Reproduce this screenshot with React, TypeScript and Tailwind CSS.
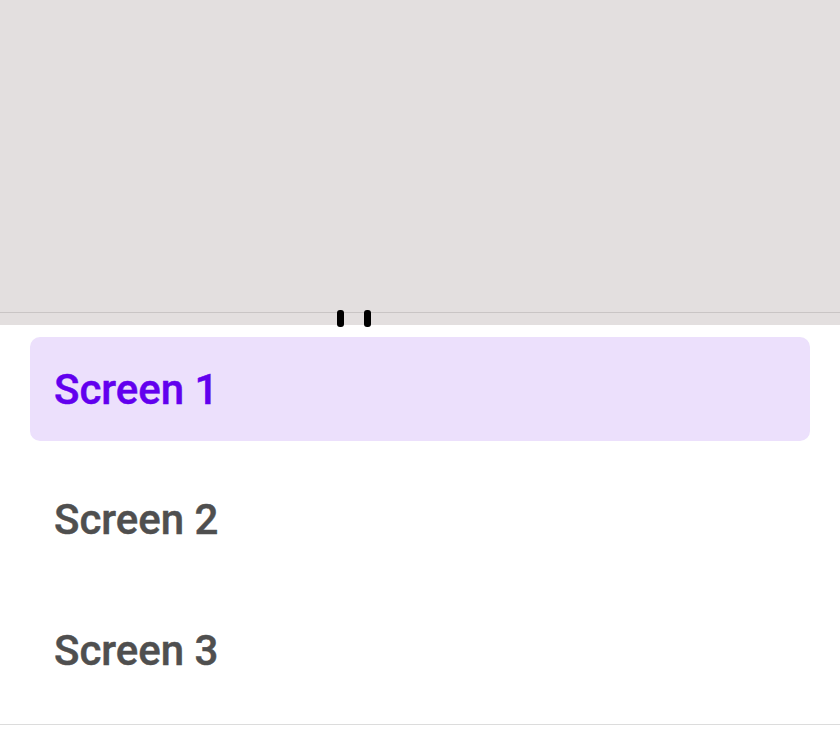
import React from "react";

const screens = ["Screen 1", "Screen 2", "Screen 3"];

export default function App() {
    const active = 0;

    return (
        <div
            className="flex h-[734px] w-[840px] flex-col bg-white"
            style={{ fontFamily: "Roboto, 'Liberation Sans', sans-serif" }}
        >
            {/* Top pane */}
            <div className="h-[312px] bg-[#e3dfdf]" />

            {/* Divider with grab handle */}
            <div className="relative h-[13px] border-t border-[#c9c5c5] bg-[#e3dfdf]">
                <div className="absolute left-[337px] top-[-3px] h-[17px] w-[7px] rounded-[3px] bg-black" />
                <div className="absolute left-[364px] top-[-3px] h-[17px] w-[7px] rounded-[3px] bg-black" />
            </div>

            {/* Screen list */}
            <div className="flex flex-1 flex-col gap-[26.5px] px-[30px] pt-[12px]">
                {screens.map((name, index) => (
                    <div
                        key={name}
                        className={
                            index === active
                                ? "flex h-[104px] items-center rounded-[10px] bg-[#ece0fc] px-[24px] text-[42px] font-medium text-[#6200ee] [-webkit-text-stroke:0.45px_#6200ee]"
                                : "flex h-[104px] items-center rounded-[10px] px-[24px] text-[42px] font-medium text-[#4f4f4f] [-webkit-text-stroke:0.45px_#4f4f4f]"
                        }
                    >
                        {name}
                    </div>
                ))}
            </div>

            <div className="mb-[9px] h-px bg-[#dcdcdc]" />
        </div>
    );
}
